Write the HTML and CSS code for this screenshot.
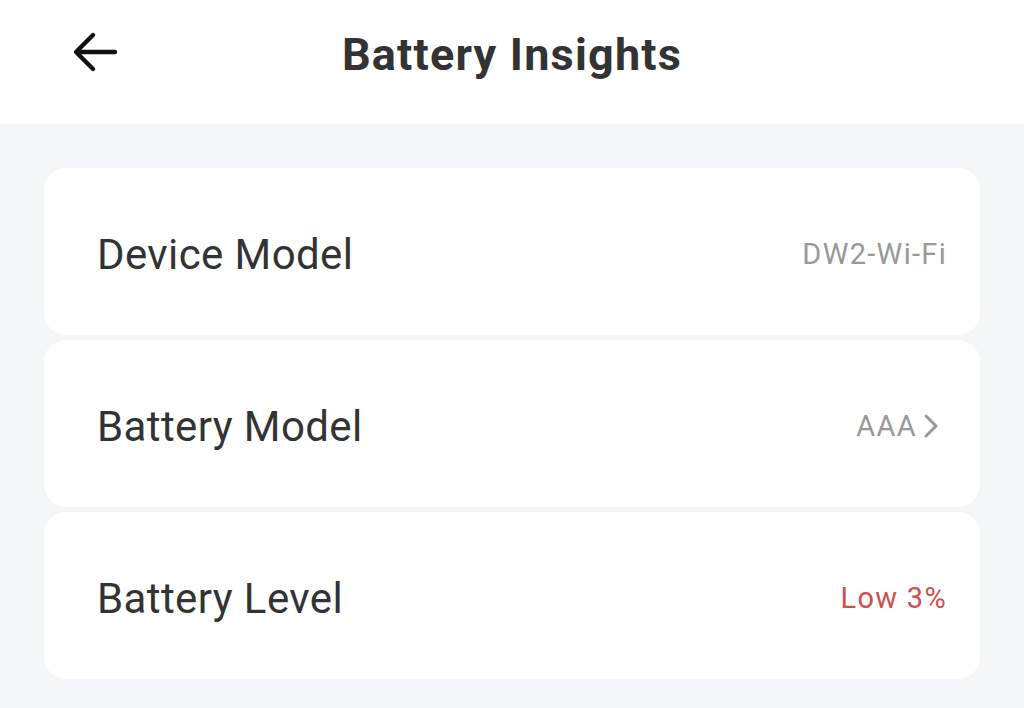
FILE: index.html
```html
<!DOCTYPE html>
<html>
<head>
<meta charset="utf-8">
<link rel="stylesheet" href="styles.css">
</head>
<body>
<header class="topbar">
  <button class="back" aria-label="Back">
    <svg width="48" height="44" viewBox="0 0 48 44"><path d="M44 22H7M22 5L5 22l17 17" fill="none" stroke="#111" stroke-width="4.4" stroke-linecap="round" stroke-linejoin="round"/></svg>
  </button>
  <h1 class="title">Battery Insights</h1>
</header>
<main class="list">
  <div class="card"><span class="label">Device Model</span><span class="value">DW2-Wi-Fi</span></div>
  <div class="card"><span class="label">Battery Model</span><span class="value link">AAA<svg class="chev" width="18" height="26" viewBox="0 0 18 26"><path d="M4 3l10 10L4 23" fill="none" stroke="#999" stroke-width="3" stroke-linecap="round" stroke-linejoin="round"/></svg></span></div>
  <div class="card"><span class="label">Battery Level</span><span class="value low">Low 3%</span></div>
</main>
</body>
</html>
```
FILE: styles.css
```css
* { box-sizing: border-box; }
html, body { margin: 0; padding: 0; }
body {
  width: 1024px;
  height: 708px;
  overflow: hidden;
  background: #f5f6fa;
  font-family: Roboto, "Noto Sans", sans-serif;
}
.topbar {
  height: 124px;
  background: #ffffff;
  display: flex;
  align-items: center;
  justify-content: center;
  position: relative;
}
.back {
  position: absolute;
  left: 71px;
  top: 30px;
  border: 0;
  background: none;
  padding: 0;
  width: 48px;
  height: 44px;
}
.back svg { display: block; }
.title {
  margin: 0 0 16px 0;
  font-size: 45px;
  font-weight: 700;
  letter-spacing: 1.2px;
  color: #333333;
  line-height: 1;
}
.list {
  padding: 44px 44px 0 44px;
  display: flex;
  flex-direction: column;
  gap: 5px;
}
.card {
  height: 167px;
  background: #ffffff;
  border-radius: 22px;
  display: flex;
  align-items: center;
  justify-content: space-between;
  padding: 5px 33px 0 53px;
}
.label {
  font-size: 42px;
  letter-spacing: 0.4px;
  color: #333333;
}
.value {
  font-size: 29px;
  letter-spacing: 1.3px;
  color: #999999;
  display: flex;
  align-items: center;
}
.value.link { margin-right: 7px; }
.chev { margin-left: 5px; }
.low { color: #d0504c; }
```
